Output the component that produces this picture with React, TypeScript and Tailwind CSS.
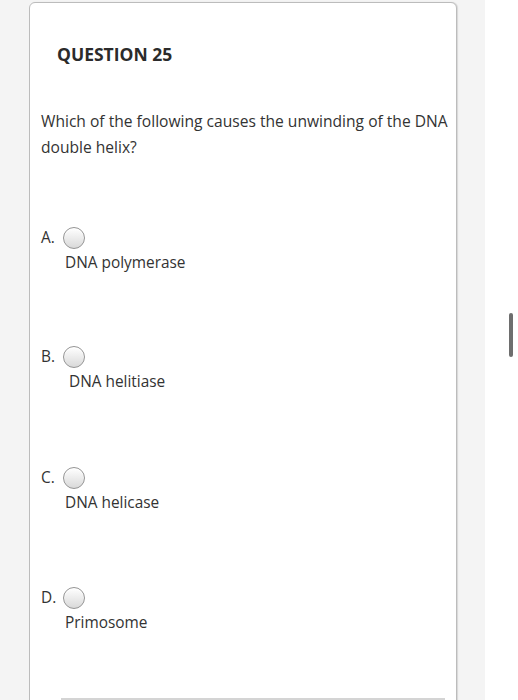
const options = [
  { letter: 'A.', text: 'DNA polymerase', indent: 'ml-[35px]', gap: 'mt-0' },
  { letter: 'B.', text: 'DNA helitiase', indent: 'ml-[39px]', gap: 'mt-[71px]' },
  { letter: 'C.', text: 'DNA helicase', indent: 'ml-[35px]', gap: 'mt-[73px]' },
  { letter: 'D.', text: 'Primosome', indent: 'ml-[35px]', gap: 'mt-[72px]' },
];

function Radio() {
  return (
    <span className="inline-block h-[22px] w-[22px] rounded-full border border-[#959595] bg-gradient-to-b from-white to-[#d9d9d9] shadow-[inset_0_1px_1px_rgba(255,255,255,0.9)]" />
  );
}

export default function App() {
  return (
    <div
      className="flex h-[700px] w-[518px] overflow-hidden bg-white text-[#333333]"
      style={{ fontFamily: '"Open Sans", "Noto Sans", Arial, sans-serif' }}
    >
      <div className="w-[485px] shrink-0 bg-[#f4f4f4] pl-[29px] pt-[2px]">
        <div className="h-[720px] w-[428px] rounded-t-[6px] border border-[#bcbcbc] bg-white shadow-[1px_0_1px_rgba(0,0,0,0.12)]">
          <h2 className="pl-[27px] pt-[39px] text-[17.5px] font-bold leading-[24px] text-[#2b2b2b]">QUESTION 25</h2>

          <p className="mt-[42px] w-[420px] pl-[11px] text-[15.6px] leading-[26px]">
            Which of the following causes the unwinding of the DNA double helix?
          </p>

          <div className="mt-[66px] flex flex-col">
            {options.map((o) => (
              <div key={o.letter} className={o.gap}>
                <div className="flex h-[24px] items-center gap-[5px] pl-[11px]">
                  <span className="w-[17px] text-[15.4px] leading-[24px]">{o.letter}</span>
                  <Radio />
                </div>
                <div className={`${o.indent} mt-[2px] text-[15.4px] leading-[22px]`}>{o.text}</div>
              </div>
            ))}
          </div>

          <div className="ml-[31px] mt-[64px] h-3 w-[384px] border-t-2 border-[#d4d4d4]" />
        </div>
      </div>
      <div className="flex-1 pl-[24px] pt-[313px]">
        <div className="h-[44px] w-[4px] rounded-sm bg-[#6e6e6e]" />
      </div>
    </div>
  );
}
